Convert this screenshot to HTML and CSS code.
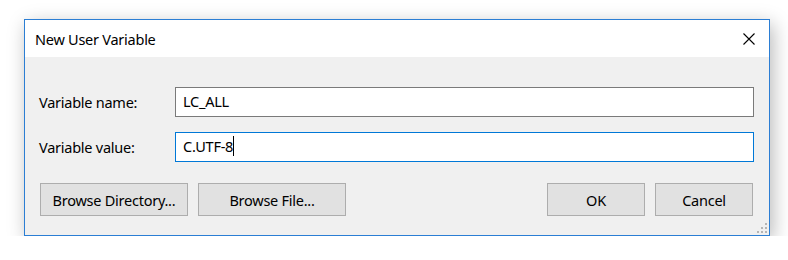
FILE: index.html
```html
<!DOCTYPE html>
<html>
<head>
<meta charset="utf-8">
<link rel="stylesheet" href="styles.css">
</head>
<body>
<div class="dialog">
  <div class="titlebar">
    <span class="title">New User Variable</span>
    <svg class="close" width="12" height="12" viewBox="0 0 12 12"><path d="M0.5 0.5 L11.5 11.5 M11.5 0.5 L0.5 11.5" stroke="#000" stroke-width="1.1" fill="none"/></svg>
  </div>
  <div class="content">
    <div class="form">
      <label class="label">Variable name:</label>
      <div class="field">LC_ALL</div>
      <label class="label">Variable value:</label>
      <div class="field focused"><span class="caret">C.UTF-8</span></div>
    </div>
    <div class="buttons">
      <div class="left">
        <div class="btn">Browse Directory...</div>
        <div class="btn">Browse File...</div>
      </div>
      <div class="right">
        <div class="btn small">OK</div>
        <div class="btn small">Cancel</div>
      </div>
    </div>
    <div class="grip">
      <i class="d1"></i><i class="d2"></i><i class="d3"></i><i class="d4"></i><i class="d5"></i><i class="d6"></i>
    </div>
  </div>
</div>
</body>
</html>
```
FILE: styles.css
```css
html, body {
  margin: 0;
  padding: 0;
  background: #ffffff;
}
body {
  font-family: "Noto Sans", "Open Sans", sans-serif;
  font-size: 14.5px;
  letter-spacing: -0.25px;
  color: #000;
}
.dialog {
  margin: 19px 0 0 24px;
  width: 746px;
  height: 217px;
  box-sizing: border-box;
  border: 1px solid #2b7ed4;
  background: #f0f0f0;
  box-shadow: 3px 5px 18px rgba(0,0,0,0.28);
  display: flex;
  flex-direction: column;
}
.titlebar {
  height: 37px;
  background: #fff;
  display: flex;
  align-items: center;
  justify-content: space-between;
  padding: 0 14px 0 10px;
}
.title {
  line-height: 20px;
}
.close {
  display: block;
}
.content {
  position: relative;
  flex: 1;
  padding: 30px 15px 0 14px;
}
.form {
  display: grid;
  grid-template-columns: 136px 1fr;
  row-gap: 15px;
  align-items: center;
}
.label {
  line-height: 20px;
}
.field {
  height: 30px;
  box-sizing: border-box;
  border: 1px solid #7a7a7a;
  background: #fff;
  padding: 0 7px;
  line-height: 27px;
}
.field.focused {
  border-color: #0078d7;
}
.caret {
  border-right: 1px solid #000;
  padding-right: 0;
}
.buttons {
  margin-top: 21px;
  display: flex;
  justify-content: space-between;
  padding-left: 1px;
}
.left, .right {
  display: flex;
  gap: 10px;
}
.right {
  gap: 10px;
  margin-right: 1px;
}
.btn {
  width: 148px;
  height: 33px;
  box-sizing: border-box;
  border: 1px solid #adadad;
  background: #e1e1e1;
  display: flex;
  align-items: center;
  justify-content: center;
  line-height: 20px;
}
.btn.small {
  width: 98px;
}
.grip {
  position: absolute;
  right: 2px;
  bottom: 2px;
  width: 10px;
  height: 10px;
}
.grip i {
  position: absolute;
  width: 2px;
  height: 2px;
  background: #b5b5b5;
}
.grip .d1 { right: 0; top: 0; }
.grip .d2 { right: 4px; top: 4px; }
.grip .d3 { right: 0; top: 4px; }
.grip .d4 { right: 8px; top: 8px; }
.grip .d5 { right: 4px; top: 8px; }
.grip .d6 { right: 0; top: 8px; }
```
